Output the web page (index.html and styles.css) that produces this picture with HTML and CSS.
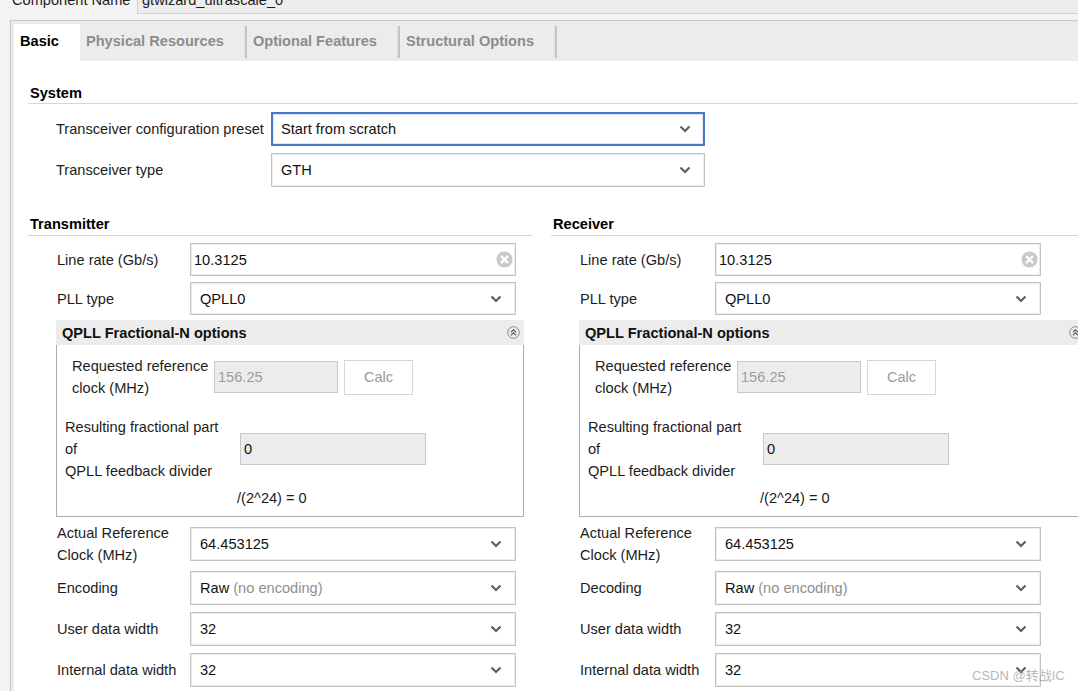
FILE: index.html
```html
<!DOCTYPE html>
<html>
<head>
<meta charset="utf-8">
<link rel="stylesheet" href="styles.css">
</head>
<body>
<div class="compname">
  <span class="cn-label">Component Name</span>
  <div class="cn-input">gtwizard_ultrascale_0</div>
</div>

<div class="panel">
  <div class="tabs">
    <div class="tab active">Basic</div>
    <div class="tab">Physical Resources</div>
    <div class="sep"></div>
    <div class="tab">Optional Features</div>
    <div class="sep"></div>
    <div class="tab">Structural Options</div>
    <div class="sep"></div>
  </div>

  <div class="content">
    <div class="sys">
      <div class="section-head">System</div>
      <div class="sys-row">
        <div class="sys-label">Transceiver configuration preset</div>
        <div class="field select focused sys-field"><span>Start from scratch</span>
          <svg class="chev" width="12" height="8" viewBox="0 0 12 8"><path d="M1.5 1.5 L6 6 L10.5 1.5" fill="none" stroke="#5f5f5f" stroke-width="2.2"/></svg>
        </div>
      </div>
      <div class="sys-row">
        <div class="sys-label">Transceiver type</div>
        <div class="field select sys-field"><span>GTH</span>
          <svg class="chev" width="12" height="8" viewBox="0 0 12 8"><path d="M1.5 1.5 L6 6 L10.5 1.5" fill="none" stroke="#5f5f5f" stroke-width="2.2"/></svg>
        </div>
      </div>
    </div>

    <div class="cols">
      <!-- Transmitter -->
      <div class="col">
        <div class="section-head">Transmitter</div>
        <div class="row first">
          <div class="label">Line rate (Gb/s)</div>
          <div class="field text small"><span>10.3125</span>
            <svg class="clear" width="17" height="17" viewBox="0 0 17 17"><circle cx="8.5" cy="8.5" r="8" fill="#c9c9c9"/><path d="M5.6 5.6 L11.4 11.4 M11.4 5.6 L5.6 11.4" stroke="#fff" stroke-width="2.2" stroke-linecap="round"/></svg>
          </div>
        </div>
        <div class="row pll">
          <div class="label">PLL type</div>
          <div class="field select small"><span>QPLL0</span>
            <svg class="chev" width="12" height="8" viewBox="0 0 12 8"><path d="M1.5 1.5 L6 6 L10.5 1.5" fill="none" stroke="#5f5f5f" stroke-width="2.2"/></svg>
          </div>
        </div>
        <div class="qpll">
          <div class="qpll-head"><span>QPLL Fractional-N options</span>
            <svg class="collapse" width="13" height="13" viewBox="0 0 13 13"><circle cx="6.5" cy="6.5" r="5.8" fill="none" stroke="#8a8a8a" stroke-width="1"/><path d="M4 6.2 L6.5 3.8 L9 6.2 M4 9.2 L6.5 6.8 L9 9.2" fill="none" stroke="#666" stroke-width="1.2"/></svg>
          </div>
          <div class="qpll-box">
            <div class="q-r1">
              <div class="q-l1">Requested reference<br>clock (MHz)</div>
              <div class="dis-in w124">156.25</div>
              <div class="calc">Calc</div>
            </div>
            <div class="q-r2">
              <div class="q-l2">Resulting fractional part<br>of<br>QPLL feedback divider</div>
              <div class="dis-in w186 dark">0</div>
            </div>
            <div class="q-r3">/(2^24) = 0</div>
          </div>
        </div>
        <div class="row tall">
          <div class="label">Actual Reference<br>Clock (MHz)</div>
          <div class="field select"><span>64.453125</span>
            <svg class="chev" width="12" height="8" viewBox="0 0 12 8"><path d="M1.5 1.5 L6 6 L10.5 1.5" fill="none" stroke="#5f5f5f" stroke-width="2.2"/></svg>
          </div>
        </div>
        <div class="row">
          <div class="label">Encoding</div>
          <div class="field select"><span>Raw <span class="muted">(no encoding)</span></span>
            <svg class="chev" width="12" height="8" viewBox="0 0 12 8"><path d="M1.5 1.5 L6 6 L10.5 1.5" fill="none" stroke="#5f5f5f" stroke-width="2.2"/></svg>
          </div>
        </div>
        <div class="row">
          <div class="label">User data width</div>
          <div class="field select"><span>32</span>
            <svg class="chev" width="12" height="8" viewBox="0 0 12 8"><path d="M1.5 1.5 L6 6 L10.5 1.5" fill="none" stroke="#5f5f5f" stroke-width="2.2"/></svg>
          </div>
        </div>
        <div class="row">
          <div class="label">Internal data width</div>
          <div class="field select"><span>32</span>
            <svg class="chev" width="12" height="8" viewBox="0 0 12 8"><path d="M1.5 1.5 L6 6 L10.5 1.5" fill="none" stroke="#5f5f5f" stroke-width="2.2"/></svg>
          </div>
        </div>
      </div>

      <!-- Receiver -->
      <div class="col rx">
        <div class="section-head">Receiver</div>
        <div class="row first">
          <div class="label">Line rate (Gb/s)</div>
          <div class="field text small"><span>10.3125</span>
            <svg class="clear" width="17" height="17" viewBox="0 0 17 17"><circle cx="8.5" cy="8.5" r="8" fill="#c9c9c9"/><path d="M5.6 5.6 L11.4 11.4 M11.4 5.6 L5.6 11.4" stroke="#fff" stroke-width="2.2" stroke-linecap="round"/></svg>
          </div>
        </div>
        <div class="row pll">
          <div class="label">PLL type</div>
          <div class="field select small"><span>QPLL0</span>
            <svg class="chev" width="12" height="8" viewBox="0 0 12 8"><path d="M1.5 1.5 L6 6 L10.5 1.5" fill="none" stroke="#5f5f5f" stroke-width="2.2"/></svg>
          </div>
        </div>
        <div class="qpll">
          <div class="qpll-head"><span>QPLL Fractional-N options</span>
            <svg class="collapse" width="13" height="13" viewBox="0 0 13 13"><circle cx="6.5" cy="6.5" r="5.8" fill="none" stroke="#8a8a8a" stroke-width="1"/><path d="M4 6.2 L6.5 3.8 L9 6.2 M4 9.2 L6.5 6.8 L9 9.2" fill="none" stroke="#666" stroke-width="1.2"/></svg>
          </div>
          <div class="qpll-box">
            <div class="q-r1">
              <div class="q-l1">Requested reference<br>clock (MHz)</div>
              <div class="dis-in w124">156.25</div>
              <div class="calc">Calc</div>
            </div>
            <div class="q-r2">
              <div class="q-l2">Resulting fractional part<br>of<br>QPLL feedback divider</div>
              <div class="dis-in w186 dark">0</div>
            </div>
            <div class="q-r3">/(2^24) = 0</div>
          </div>
        </div>
        <div class="row tall">
          <div class="label">Actual Reference<br>Clock (MHz)</div>
          <div class="field select"><span>64.453125</span>
            <svg class="chev" width="12" height="8" viewBox="0 0 12 8"><path d="M1.5 1.5 L6 6 L10.5 1.5" fill="none" stroke="#5f5f5f" stroke-width="2.2"/></svg>
          </div>
        </div>
        <div class="row">
          <div class="label">Decoding</div>
          <div class="field select"><span>Raw <span class="muted">(no encoding)</span></span>
            <svg class="chev" width="12" height="8" viewBox="0 0 12 8"><path d="M1.5 1.5 L6 6 L10.5 1.5" fill="none" stroke="#5f5f5f" stroke-width="2.2"/></svg>
          </div>
        </div>
        <div class="row">
          <div class="label">User data width</div>
          <div class="field select"><span>32</span>
            <svg class="chev" width="12" height="8" viewBox="0 0 12 8"><path d="M1.5 1.5 L6 6 L10.5 1.5" fill="none" stroke="#5f5f5f" stroke-width="2.2"/></svg>
          </div>
        </div>
        <div class="row">
          <div class="label">Internal data width</div>
          <div class="field select"><span>32</span>
            <svg class="chev" width="12" height="8" viewBox="0 0 12 8"><path d="M1.5 1.5 L6 6 L10.5 1.5" fill="none" stroke="#5f5f5f" stroke-width="2.2"/></svg>
          </div>
        </div>
      </div>
    </div>
  </div>
</div>

<div class="watermark">CSDN @转战IC</div>
</body>
</html>
```
FILE: styles.css
```css
html, body {
  margin: 0;
  padding: 0;
  overflow: hidden;
  width: 1078px;
  height: 691px;
}
body {
  background: #f4f4f4;
  font-family: "Liberation Sans", Arial, "Noto Sans CJK SC", sans-serif;
  font-size: 14.6px;
  color: #1c1c1c;
  position: relative;
}

/* component name strip */
.compname {
  display: flex;
  height: 14px;
  overflow: hidden;
  padding-left: 12px;
}
.cn-label {
  margin-top: -9px;
  line-height: 18px;
  width: 125px;
  flex: none;
}
.cn-input {
  flex: 1;
  margin-top: -9px;
  height: 22px;
  line-height: 18px;
  background: #ededed;
  border-left: 1px solid #cfcfcf;
  border-bottom: 1px solid #d2d2d2;
  padding-left: 4px;
}

/* panel & tabs */
.panel {
  margin-top: 6px;
  margin-left: 10px;
  width: 1120px;
  height: 700px;
  border-top: 1px solid #c9c9c9;
  border-left: 1px solid #c4c4c4;
  background: #ececec;
  padding: 3px 0 0 3px;
  box-sizing: border-box;
}
.tabs {
  display: flex;
  height: 37px;
  align-items: stretch;
}
.tab {
  font-weight: bold;
  color: #8c8c8c;
  padding: 0 20px 4px 6px;
  display: flex;
  align-items: center;
}
.tab.active {
  background: #fff;
  color: #000;
  padding-right: 21px;
}
.sep {
  width: 2px;
  margin: 2px 0 3px 0;
  background: #c4c4c4;
  border-left: 1px solid #e2e2e2;
}

.content {
  background: #fff;
  height: 640px;
  padding: 23px 0 0 14px;
  box-sizing: border-box;
}

.section-head {
  font-weight: bold;
  color: #000;
  line-height: 18px;
  padding-left: 2px;
  padding-bottom: 1px;
  border-bottom: 1px solid #d6d6d6;
}

/* system */
.sys {
  width: 1066px;
  padding-bottom: 21px;
}
.sys .section-head {
  margin-bottom: 8px;
}
.sys-row {
  display: flex;
  align-items: center;
  padding-left: 28px;
  margin-bottom: 7px;
}
.sys-label {
  width: 215px;
  flex: none;
}

/* fields */
.field {
  box-sizing: border-box;
  width: 326px;
  height: 34px;
  border: 1px solid #c3c3c3;
  box-shadow: inset 0 0 0 1px #ececec;
  background: #fff;
  display: flex;
  align-items: center;
  justify-content: space-between;
  color: #111;
  flex: none;
}
.field.sys-field {
  width: 434px;
}
.field.small {
  height: 33px;
}
.field.select {
  padding: 0 13px 0 9px;
}
.field.text {
  padding: 0 2px 0 3px;
}
.field.focused {
  border: 2px solid #4878cc;
  box-shadow: inset 0 0 0 1px #dbe6f7;
  padding-left: 8px;
  padding-right: 12px;
}
.muted {
  color: #8f8f8f;
}
.chev, .clear, .collapse {
  flex: none;
  display: block;
}

/* columns */
.cols {
  display: grid;
  grid-template-columns: 504px 543px;
  column-gap: 19px;
}
.col .section-head {
  padding-bottom: 2px;
  margin-bottom: 7px;
}
.row {
  display: flex;
  align-items: center;
  padding-left: 29px;
  margin-bottom: 7px;
}
.row.first {
  margin-bottom: 6px;
}
.row.pll {
  margin-bottom: 5px;
}
.row.tall {
  margin-top: 5px;
  margin-bottom: 5px;
}
.label {
  width: 133px;
  flex: none;
  line-height: 22px;
}
.col.rx .label {
  width: 135px;
}

/* QPLL box */
.qpll {
  margin: 0 8px 0 28px;
}
.qpll-head {
  height: 25px;
  background: #ececec;
  font-weight: bold;
  color: #111;
  display: flex;
  align-items: center;
  justify-content: space-between;
  padding: 0 4px 0 6px;
}
.qpll-box {
  border: 1px solid #a8afbc;
  border-top: none;
  padding: 10px 0 7px 0;
}
.q-r1 {
  display: flex;
  align-items: center;
  padding-left: 15px;
}
.q-l1 {
  width: 142px;
  flex: none;
  line-height: 22px;
}
.dis-in {
  box-sizing: border-box;
  height: 32px;
  background: #ececec;
  border: 1px solid #c8c8c8;
  color: #9c9c9c;
  padding-left: 3px;
  display: flex;
  align-items: center;
  flex: none;
}
.dis-in.dark {
  color: #111;
}
.w124 { width: 124px; }
.w186 { width: 186px; }
.calc {
  box-sizing: border-box;
  width: 69px;
  height: 35px;
  margin-left: 6px;
  border: 1px solid #d6d6d6;
  background: #fff;
  color: #9c9c9c;
  display: flex;
  align-items: center;
  justify-content: center;
}
.q-r2 {
  display: flex;
  align-items: center;
  padding-left: 8px;
  margin-top: 17px;
}
.q-l2 {
  width: 175px;
  flex: none;
  line-height: 22px;
}
.q-r3 {
  margin-top: 5px;
  padding-left: 180px;
  line-height: 22px;
}

.watermark {
  position: absolute;
  left: 972px;
  top: 665px;
  font-family: "Liberation Sans", "Noto Sans CJK SC", sans-serif;
  font-size: 13px;
  color: rgba(150, 150, 150, 0.7);
  white-space: nowrap;
}
```
